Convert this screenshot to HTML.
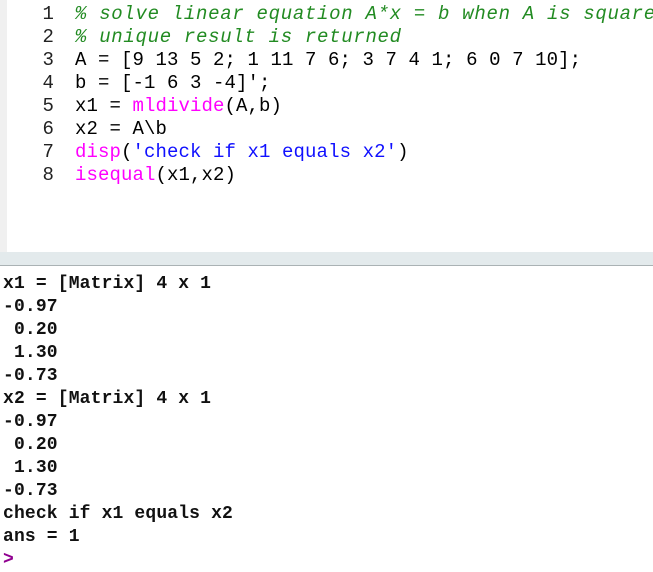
<!DOCTYPE html>
<html><head><style>
body{margin:0;width:653px;height:567px;overflow:hidden;background:#fff;position:relative}
.strip{position:absolute;left:0;top:0;width:7px;height:252px;background:#f0f0f0}
.band{position:absolute;left:0;top:252px;width:653px;height:13px;background:#e3eaec;border-bottom:1px solid #aab2b4}
.ed{position:absolute;left:0;top:3px;font:19px/23px "Liberation Mono",monospace;white-space:pre;color:#000;letter-spacing:0.1px}
.ln{display:inline-block;width:54px;text-align:right;margin-right:21px;color:#222}
.c{color:#228b22;font-style:italic;letter-spacing:0.7px}
.f{color:#ff00ff}
.s{color:#1010ff}
.con{position:absolute;left:3px;top:273px;font:bold 18px/23px "Liberation Mono",monospace;white-space:pre;color:#111;letter-spacing:0.15px}
.p{color:#900090}
</style></head><body>
<div class="strip"></div>
<div class="ed"><span class="ln">1</span><span class="c">% solve linear equation A*x = b when A is square</span>
<span class="ln">2</span><span class="c">% unique result is returned</span>
<span class="ln">3</span>A = [9 13 5 2; 1 11 7 6; 3 7 4 1; 6 0 7 10];
<span class="ln">4</span>b = [-1 6 3 -4]';
<span class="ln">5</span>x1 = <span class="f">mldivide</span>(A,b)
<span class="ln">6</span>x2 = A\b
<span class="ln">7</span><span class="f">disp</span>(<span class="s">'check if x1 equals x2'</span>)
<span class="ln">8</span><span class="f">isequal</span>(x1,x2)</div>
<div class="band"></div>
<div class="con">x1 = [Matrix] 4 x 1
-0.97
 0.20
 1.30
-0.73
x2 = [Matrix] 4 x 1
-0.97
 0.20
 1.30
-0.73
check if x1 equals x2
ans = 1
<span class="p">&gt;</span></div>
</body></html>
